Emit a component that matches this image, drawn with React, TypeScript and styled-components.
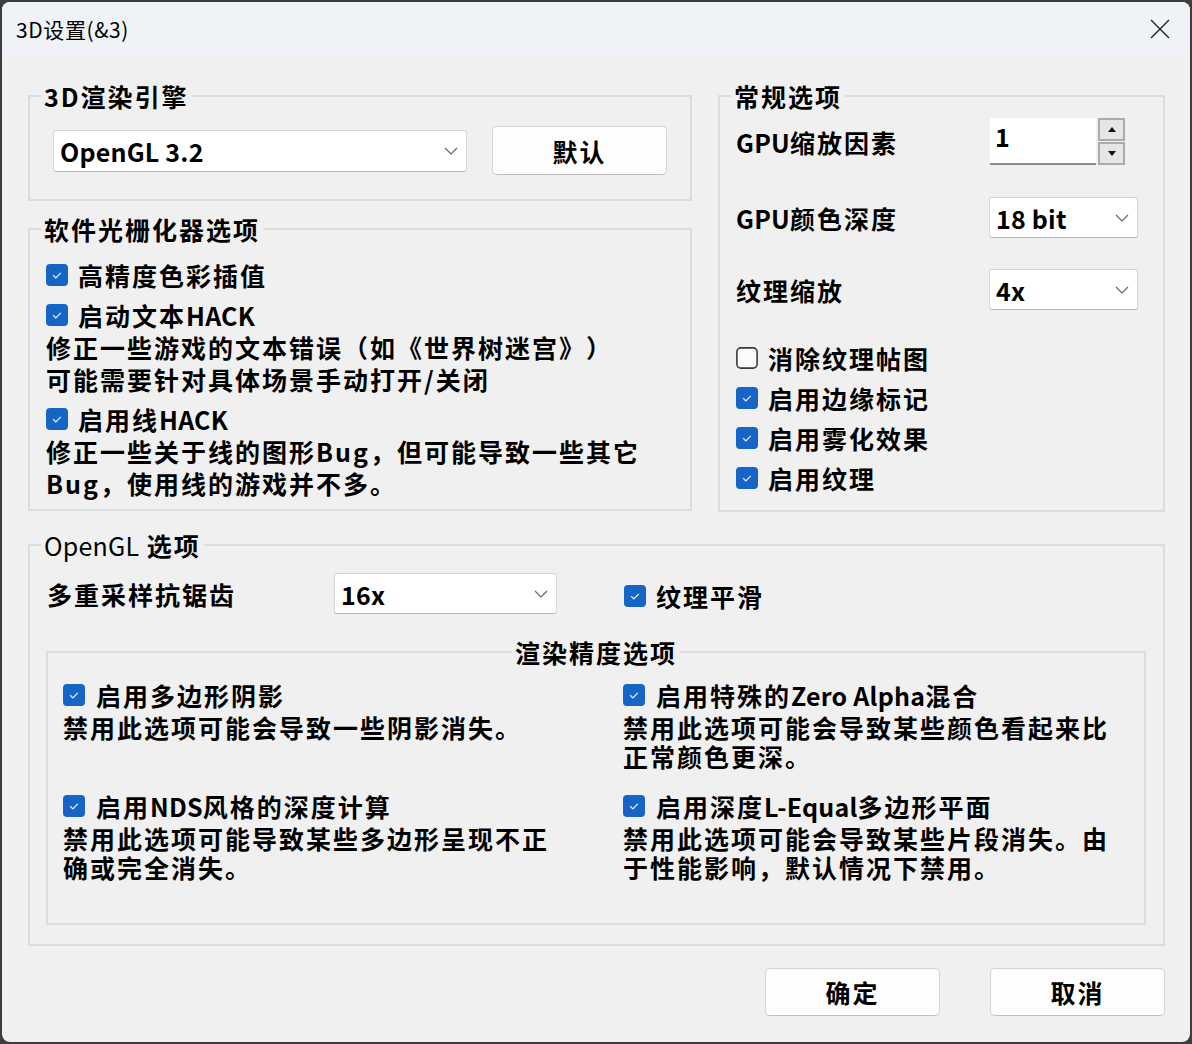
import React from 'react'
import styled, { createGlobalStyle } from 'styled-components'

const GlobalStyle = createGlobalStyle`
  html, body { margin: 0; padding: 0; background: #3d3d3d; }
  #root { width: 1192px; height: 1044px; padding: 2px; box-sizing: border-box; }
  * { box-sizing: border-box; text-spacing-trim: space-all; }
`

const font = `"Noto Sans CJK SC", "Noto Sans", sans-serif`

const Window = styled.div`
  width: 100%;
  height: 100%;
  background: #f0f0f0;
  border-radius: 8px;
  overflow: hidden;
  display: flex;
  flex-direction: column;
  font-family: ${font};
  color: #000;
`

const TitleBar = styled.div`
  height: 54px;
  flex: none;
  background: #eff3f8;
  display: flex;
  align-items: center;
  justify-content: space-between;
  padding: 0 19px 0 14px;
`

const Title = styled.span`
  font-size: 21px;
  font-weight: 400;
  letter-spacing: 0.6px;
`

const CloseButton = styled.div`
  width: 22px;
  height: 22px;
  display: flex;
  align-items: center;
  justify-content: center;
`

const Body = styled.div`
  flex: 1;
  display: flex;
  flex-direction: column;
  padding: 25px 25px 25px 26px;
`

const TopRow = styled.div`
  display: grid;
  grid-template-columns: 664px 1fr;
  column-gap: 26px;
`

const LeftColumn = styled.div`
  display: flex;
  flex-direction: column;
  gap: 13px;
`

const Group = styled.fieldset`
  margin: 0;
  padding: 0;
  min-width: 0;
  border: 2px solid #dcdcdc;
`

const Legend = styled.legend<{ $center?: boolean }>`
  font-size: 25px;
  line-height: 30px;
  font-weight: 700;
  letter-spacing: 2px;
  padding: 0 3px;
  margin-left: ${(p) => (p.$center ? 'auto' : '11px')};
  margin-right: ${(p) => (p.$center ? 'auto' : '0')};
  white-space: nowrap;
`

/* latin runs are narrower than the ideographs around them */
const Latin = styled.span<{ $thin?: boolean }>`
  letter-spacing: 0.2px;
  font-weight: ${(p) => (p.$thin ? 400 : 700)};
`

const Label = styled.span`
  font-size: 25px;
  line-height: 30px;
  font-weight: 700;
  letter-spacing: 2px;
  white-space: nowrap;
`

const Desc = styled.div<{ $lh: number }>`
  font-size: 25px;
  font-weight: 700;
  letter-spacing: 2px;
  line-height: ${(p) => p.$lh}px;
  white-space: nowrap;
`

const EngineRow = styled.div`
  display: flex;
  align-items: center;
  gap: 25px;
  padding: 15px 22px 24px 23px;
`

const RasterList = styled.div`
  display: flex;
  flex-direction: column;
  gap: 8px;
  padding: 15px 16px 10px 16px;
`

const GeneralBody = styled.div`
  padding: 7px 24px 12px 16px;
`

const FormRow = styled.div<{ $h: number; $gap: number }>`
  display: grid;
  grid-template-columns: 253px 1fr;
  align-items: center;
  height: ${(p) => p.$h}px;
  margin-top: ${(p) => p.$gap}px;
`

const CheckList = styled.div`
  display: flex;
  flex-direction: column;
  margin-top: 28px;
`

const CheckRow = styled.div<{ $h: number; $gap?: number }>`
  display: flex;
  align-items: center;
  gap: ${(p) => p.$gap ?? 10}px;
  height: ${(p) => p.$h}px;
`

const Combo = styled.div<{ $w: number; $h: number }>`
  width: ${(p) => p.$w}px;
  height: ${(p) => p.$h}px;
  background: #fff;
  border: 1px solid #d6d6d6;
  border-bottom-color: #b9b9b9;
  border-radius: 3px;
  display: flex;
  align-items: center;
  justify-content: space-between;
  padding: 0 8px 0 6px;
  font-size: 25px;
  font-weight: 700;
  white-space: nowrap;
`

const Spin = styled.div`
  display: flex;
  align-items: center;
  gap: 2px;
  padding-left: 1px;
`

const SpinField = styled.div`
  width: 106px;
  height: 47px;
  background: #fff;
  border-bottom: 2px solid #8a8a8a;
  padding: 0 5px;
  font-size: 25px;
  line-height: 36px;
  font-weight: 700;
`

const SpinButtons = styled.div`
  display: flex;
  flex-direction: column;
  gap: 1px;
`

const SpinButton = styled.div`
  width: 27px;
  height: 23px;
  background: #e6e6e6;
  border: 2px solid #ababab;
  display: flex;
  align-items: center;
  justify-content: center;
`

const PushButton = styled.button<{ $h: number }>`
  width: 175px;
  height: ${(p) => p.$h}px;
  flex: none;
  background: #fdfdfd;
  border: 1px solid #d3d3d3;
  border-bottom-color: #bdbdbd;
  border-radius: 5px;
  font-family: ${font};
  font-size: 25px;
  font-weight: 700;
  letter-spacing: 2px;
  color: #000;
  padding: 0;
`

const OpenGLGroup = styled(Group)`
  margin-top: 18px;
`

const OpenGLBody = styled.div`
  padding: 13px 17px 19px 16px;
`

const SampleRow = styled.div`
  display: flex;
  align-items: center;
  height: 41px;
`

const SampleLabel = styled(Label)`
  width: 288px;
  padding-left: 1px;
`

const SmoothCheck = styled(CheckRow)`
  margin-left: 67px;
  margin-top: 4px;
`

const PrecisionGroup = styled(Group)`
  margin-top: 23px;
`

const PrecisionGrid = styled.div`
  display: grid;
  grid-template-columns: 560px 1fr;
  row-gap: 17px;
  padding: 10px 15px 41px 15px;
`

const Option = styled.div`
  display: flex;
  flex-direction: column;
`

const ButtonBar = styled.div`
  display: flex;
  justify-content: flex-end;
  gap: 50px;
  margin-top: 22px;
`

const Check = ({ on = true }: { on?: boolean }) =>
  on ? (
    <svg width="22" height="22" viewBox="0 0 22 22">
      <rect x="0" y="0" width="22" height="22" rx="4" fill="#1565c6" />
      <path d="M7.2 11.3 L9.9 13.9 L14.8 8.9" stroke="#e6f0fb" strokeWidth="1.3" fill="none" />
    </svg>
  ) : (
    <svg width="22" height="22" viewBox="0 0 22 22">
      <rect x="0.9" y="0.9" width="20.2" height="20.2" rx="4" fill="#fbfbfb" stroke="#3a3a3a" strokeWidth="1.6" />
    </svg>
  )

const Chevron = () => (
  <svg width="14" height="8" viewBox="0 0 14 8">
    <path d="M1 1 L7 7 L13 1" stroke="#666" strokeWidth="1.2" fill="none" />
  </svg>
)

const Arrow = ({ up }: { up?: boolean }) => (
  <svg width="8" height="5" viewBox="0 0 8 5">
    <path d={up ? 'M0 5 L4 0 L8 5 Z' : 'M0 0 L4 5 L8 0 Z'} fill="#111" />
  </svg>
)

const App = () => (
  <>
    <GlobalStyle />
    <Window>
      <TitleBar>
        <Title>3D设置(&amp;3)</Title>
        <CloseButton>
          <svg width="20" height="20" viewBox="0 0 20 20">
            <path d="M1 1 L19 19 M19 1 L1 19" stroke="#222" strokeWidth="1.4" />
          </svg>
        </CloseButton>
      </TitleBar>
      <Body>
        <TopRow>
          <LeftColumn>
            <Group>
              <Legend>3D渲染引擎</Legend>
              <EngineRow>
                <Combo $w={414} $h={42}>
                  <Latin>OpenGL 3.2</Latin>
                  <Chevron />
                </Combo>
                <PushButton $h={49}>默认</PushButton>
              </EngineRow>
            </Group>
            <Group>
              <Legend>软件光栅化器选项</Legend>
              <RasterList>
                <CheckRow $h={32}>
                  <Check />
                  <Label>高精度色彩插值</Label>
                </CheckRow>
                <Option>
                  <CheckRow $h={32}>
                    <Check />
                    <Label>
                      启动文本<Latin>HACK</Latin>
                    </Label>
                  </CheckRow>
                  <Desc $lh={32}>
                    修正一些游戏的文本错误（如《世界树迷宫》）
                    <br />
                    可能需要针对具体场景手动打开/关闭
                  </Desc>
                </Option>
                <Option>
                  <CheckRow $h={32}>
                    <Check />
                    <Label>
                      启用线<Latin>HACK</Latin>
                    </Label>
                  </CheckRow>
                  <Desc $lh={32}>
                    修正一些关于线的图形Bug，但可能导致一些其它
                    <br />
                    Bug，使用线的游戏并不多。
                  </Desc>
                </Option>
              </RasterList>
            </Group>
          </LeftColumn>
          <Group>
            <Legend>常规选项</Legend>
            <GeneralBody>
              <FormRow $h={47} $gap={0}>
                <Label>
                  <Latin>GPU</Latin>缩放因素
                </Label>
                <Spin>
                  <SpinField>1</SpinField>
                  <SpinButtons>
                    <SpinButton>
                      <Arrow up />
                    </SpinButton>
                    <SpinButton>
                      <Arrow />
                    </SpinButton>
                  </SpinButtons>
                </Spin>
              </FormRow>
              <FormRow $h={41} $gap={32}>
                <Label>
                  <Latin>GPU</Latin>颜色深度
                </Label>
                <Combo $w={149} $h={41}>
                  <Latin>18 bit</Latin>
                  <Chevron />
                </Combo>
              </FormRow>
              <FormRow $h={41} $gap={31}>
                <Label>纹理缩放</Label>
                <Combo $w={149} $h={41}>
                  <Latin>4x</Latin>
                  <Chevron />
                </Combo>
              </FormRow>
              <CheckList>
                <CheckRow $h={40}>
                  <Check on={false} />
                  <Label>消除纹理帖图</Label>
                </CheckRow>
                <CheckRow $h={40}>
                  <Check />
                  <Label>启用边缘标记</Label>
                </CheckRow>
                <CheckRow $h={40}>
                  <Check />
                  <Label>启用雾化效果</Label>
                </CheckRow>
                <CheckRow $h={40}>
                  <Check />
                  <Label>启用纹理</Label>
                </CheckRow>
              </CheckList>
            </GeneralBody>
          </Group>
        </TopRow>

        <OpenGLGroup>
          <Legend>
            <Latin $thin>OpenGL</Latin> 选项
          </Legend>
          <OpenGLBody>
            <SampleRow>
              <SampleLabel>多重采样抗锯齿</SampleLabel>
              <Combo $w={223} $h={41}>
                <Latin>16x</Latin>
                <Chevron />
              </Combo>
              <SmoothCheck $h={41}>
                <Check />
                <Label>纹理平滑</Label>
              </SmoothCheck>
            </SampleRow>
            <PrecisionGroup>
              <Legend $center>渲染精度选项</Legend>
              <PrecisionGrid>
                <Option>
                  <CheckRow $h={36} $gap={11}>
                    <Check />
                    <Label>启用多边形阴影</Label>
                  </CheckRow>
                  <Desc $lh={29}>禁用此选项可能会导致一些阴影消失。</Desc>
                </Option>
                <Option>
                  <CheckRow $h={36} $gap={11}>
                    <Check />
                    <Label>
                      启用特殊的<Latin>Zero Alpha</Latin>混合
                    </Label>
                  </CheckRow>
                  <Desc $lh={29}>
                    禁用此选项可能会导致某些颜色看起来比
                    <br />
                    正常颜色更深。
                  </Desc>
                </Option>
                <Option>
                  <CheckRow $h={36} $gap={11}>
                    <Check />
                    <Label>
                      启用<Latin>NDS</Latin>风格的深度计算
                    </Label>
                  </CheckRow>
                  <Desc $lh={29}>
                    禁用此选项可能导致某些多边形呈现不正
                    <br />
                    确或完全消失。
                  </Desc>
                </Option>
                <Option>
                  <CheckRow $h={36} $gap={11}>
                    <Check />
                    <Label>
                      启用深度<Latin>L-Equal</Latin>多边形平面
                    </Label>
                  </CheckRow>
                  <Desc $lh={29}>
                    禁用此选项可能会导致某些片段消失。由
                    <br />
                    于性能影响，默认情况下禁用。
                  </Desc>
                </Option>
              </PrecisionGrid>
            </PrecisionGroup>
          </OpenGLBody>
        </OpenGLGroup>

        <ButtonBar>
          <PushButton $h={48}>确定</PushButton>
          <PushButton $h={48}>取消</PushButton>
        </ButtonBar>
      </Body>
    </Window>
  </>
)

export default App
